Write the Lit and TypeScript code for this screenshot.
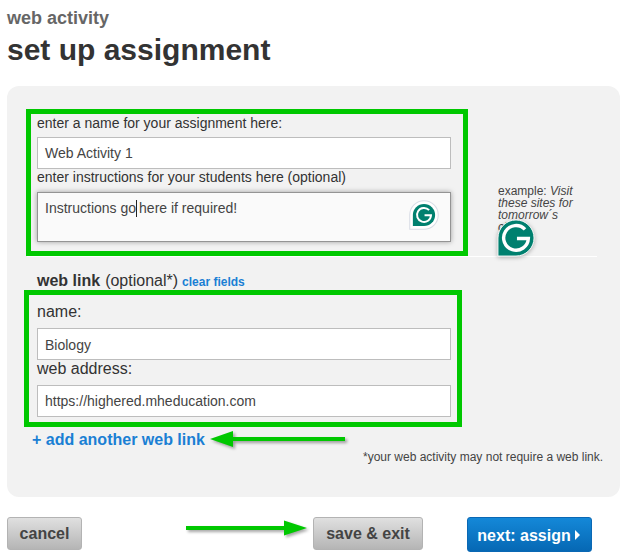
import { LitElement, html, css } from "lit";
import { customElement } from "lit/decorators.js";

const gIcon = (cls: string, dots = false) => html`<svg class=${cls} viewBox="0 0 40 40">
  <path class="g-bg" d="M1 39 V20 A19 19 0 1 1 20 39 Z"></path>
  <path class="g-in" d="M1 39 V20 A19 19 0 1 1 20 39 Z"></path>
  <path class="g-mark" d="M29.5 11 A13 13 0 1 0 33 20.5 H21" fill="none" stroke="#fff" stroke-width="3.6"></path>
  ${dots ? html`<g fill="#cfe6e1"><rect x="3" y="31" width="1.5" height="1.5"></rect><rect x="6" y="31" width="1.5" height="1.5"></rect><rect x="3" y="34" width="1.5" height="1.5"></rect><rect x="6" y="34" width="1.5" height="1.5"></rect><rect x="3" y="37" width="1.5" height="1.5"></rect><rect x="6" y="37" width="1.5" height="1.5"></rect></g>` : ""}
</svg>`;

@customElement("app-root")
export class AppRoot extends LitElement {
  static styles = css`
    :host {
      display: block;
      position: relative;
      width: 629px;
      height: 560px;
      overflow: hidden;
      background: #fff;
      font-family: "Liberation Sans", Arial, sans-serif;
      color: #333;
    }
    .sub {
      margin: 0;
      padding: 9px 0 0 7px;
      font-size: 18px;
      line-height: 18px;
      font-weight: bold;
      color: #666;
    }
    .title {
      margin: 0;
      padding: 4px 0 0 7px;
      font-size: 30px;
      line-height: 37px;
      font-weight: bold;
      color: #333;
    }
    .panel {
      position: relative;
      box-sizing: border-box;
      margin: 18px 0 0 7px;
      width: 613px;
      height: 411px;
      padding: 23px 0 0 19px;
      border-radius: 12px;
      background: #f2f2f2;
    }
    .box {
      box-sizing: border-box;
      border: 5px solid #00c800;
    }
    .box-a {
      width: 442px;
      height: 147px;
      padding: 1px 12px 0 6px;
    }
    .box-b {
      margin-left: -2px;
      width: 438px;
      height: 137px;
      padding: 8px 6px 0 8px;
    }
    .label {
      font-size: 14px;
      line-height: 16px;
      color: #333;
    }
    .box-b .label {
      font-size: 16px;
      line-height: 18px;
    }
    .field {
      box-sizing: border-box;
      display: flex;
      align-items: center;
      width: 414px;
      margin-top: 6px;
      height: 32px;
      padding: 0 7px;
      background: #fff;
      border: 1px solid #bdbdbd;
      font-size: 14px;
      color: #444;
    }
    .box-b .field { margin-top: 7px; }
    .box-b .field:nth-child(2) { padding-top: 1px; }
    .area {
      box-sizing: border-box;
      position: relative;
      width: 414px;
      height: 50px;
      margin-top: 7px;
      padding: 7px 7px 0;
      background: #fafafa;
      border: 1px solid #949494;
      box-shadow: 0 0 5px rgba(0, 0, 0, 0.35);
      font-size: 14px;
      line-height: 16px;
      color: #444;
    }
    .caret {
      display: inline-block;
      width: 1px;
      height: 17px;
      margin: 0 2px 0 0;
      vertical-align: -4px;
      background: #222;
    }
    .g-in { display: none; }
    .mini {
      position: absolute;
      right: 11px;
      top: 7px;
      width: 30px;
      height: 30px;
    }
    .mini .g-bg { fill: #fff; stroke: #d9dde6; stroke-width: 1.4px; }
    .mini .g-in {
      display: block;
      fill: #00806f;
      transform: scale(0.78);
      transform-origin: 20px 20px;
    }
    .mini .g-mark { transform: scale(0.72); transform-origin: 20px 20px; }
    .big {
      position: absolute;
      left: 490px;
      top: 133px;
      width: 38px;
      height: 38px;
      filter: drop-shadow(0 1px 2px rgba(0, 0, 0, 0.3));
    }
    .big .g-bg { fill: #00806f; stroke: #fff; stroke-width: 1px; }
    .example {
      position: absolute;
      left: 491px;
      top: 99px;
      width: 84px;
      font-size: 12px;
      line-height: 12px;
      color: #444;
    }
    .divider {
      position: absolute;
      left: 20px;
      top: 170px;
      width: 570px;
      height: 1px;
      background: #fff;
    }
    .head {
      display: flex;
      align-items: baseline;
      gap: 4px;
      margin: 16px 0 0 11px;
      height: 18px;
      line-height: 18px;
      font-size: 16px;
      color: #333;
    }
    .head b { color: #333; margin-right: 1px; }
    .clear {
      font-size: 12px;
      font-weight: bold;
      color: #1a7fd4;
    }
    .add {
      margin: 4px 0 0 6px;
      font-size: 16px;
      line-height: 18px;
      font-weight: bold;
      color: #1a7fd4;
    }
    .note {
      position: absolute;
      left: 356px;
      top: 364px;
      font-size: 12px;
      line-height: 14px;
      color: #444;
    }
    .footer {
      display: flex;
      padding: 20px 0 0 7px;
      align-items: flex-start;
    }
    .btn {
      box-sizing: border-box;
      display: flex;
      align-items: center;
      justify-content: center;
      height: 33px;
      border: 1px solid #b3b3b3;
      border-radius: 3px;
      background: linear-gradient(#e0e0e0, #b5b5b5);
      font-size: 16px;
      font-weight: bold;
      color: #444;
    }
    .cancel { width: 75px; }
    .save { width: 110px; margin-left: 231px; }
    .next {
      width: 125px;
      height: 35px;
      margin-left: 44px;
      padding: 2px 2px 0 0;
      gap: 4px;
      border: 1px solid #0a68b4;
      background: linear-gradient(#1488d8, #0668b4);
      color: #fff;
    }
    .tri {
      width: 0;
      height: 0;
      margin-bottom: 2px;
      border-left: 5px solid #fff;
      border-top: 5px solid transparent;
      border-bottom: 5px solid transparent;
    }
    .arrow {
      position: absolute;
      overflow: visible;
      filter: drop-shadow(2px 2px 1.5px rgba(0, 0, 0, 0.35));
    }
    .arrow-a { left: 210px; top: 430px; width: 135px; height: 20px; }
    .arrow-b { left: 186px; top: 518px; width: 121px; height: 20px; }
  `;

  render() {
    return html`
      <h2 class="sub">web activity</h2>
      <h1 class="title">set up assignment</h1>
      <section class="panel">
        <div class="box box-a">
          <div class="label">enter a name for your assignment here:</div>
          <div class="field">Web Activity 1</div>
          <div class="label">enter instructions for your students here (optional)</div>
          <div class="area">Instructions go<span class="caret"></span>here if required!${gIcon("mini")}</div>
        </div>
        <div class="head"><b>web link</b><span>(optional*)</span><span class="clear">clear fields</span></div>
        <div class="box box-b">
          <div class="label">name:</div>
          <div class="field">Biology</div>
          <div class="label">web address:</div>
          <div class="field">https://highered.mheducation.com</div>
        </div>
        <div class="add">+ add another web link</div>
        <div class="example">example: <i>Visit these sites for tomorrow´s class</i></div>
        <div class="divider"></div>
        ${gIcon("big", true)}
        <div class="note">*your web activity may not require a web link.</div>
      </section>
      <footer class="footer">
        <div class="btn cancel">cancel</div>
        <div class="btn save">save &amp; exit</div>
        <div class="btn next">next: assign<span class="tri"></span></div>
      </footer>
      <svg class="arrow arrow-a" viewBox="0 0 135 20"><path d="M0 9 L23 1 V7 H135 V11 H23 V17 Z" fill="#00c800"></path></svg>
      <svg class="arrow arrow-b" viewBox="0 0 121 20"><path d="M121 10 L98 2.5 V8 H0 V12 H98 V17.5 Z" fill="#00c800"></path></svg>
    `;
  }
}
